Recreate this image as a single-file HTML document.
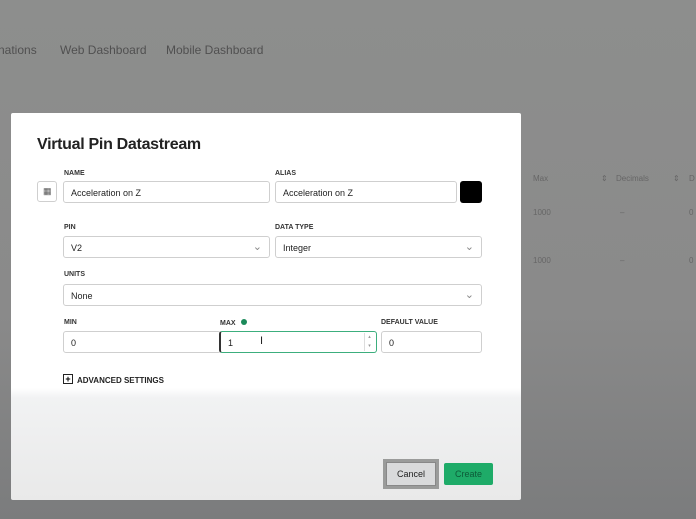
<!DOCTYPE html>
<html><head><style>
*{box-sizing:border-box;margin:0;padding:0}
body{width:696px;height:519px;overflow:hidden;background:linear-gradient(#8d8e8d,#8a8a8a 60%,#7b7c7d);font-family:"Liberation Sans",sans-serif;position:relative}
.nav{position:absolute;top:43px;font-size:12px;color:#505050}
.modal{position:absolute;left:11px;top:113px;width:510px;height:387px;background:linear-gradient(#fff 0,#fff 275px,#f1f2f3 285px,#e9e9e9 100%);border-radius:2px}
.t{position:absolute;font-size:16px;font-weight:bold;color:#222;left:26px;top:23px;letter-spacing:-0.3px}
.lbl{position:absolute;font-size:7px;font-weight:bold;color:#333}
.in{position:absolute;height:22px;border:1px solid #cfcfcf;border-radius:3px;background:#fff;font-size:9px;color:#222;padding:6px 7px}
.chev{position:absolute;right:7px;top:3px;font-size:11px;color:#888}
.th{position:absolute;font-size:8px;color:#666}
</style></head><body>
<div class="nav" style="left:-2px">nations</div>
<div class="nav" style="left:60px">Web Dashboard</div>
<div class="nav" style="left:166px">Mobile Dashboard</div>
<div class="th" style="left:533px;top:174px">Max</div><div class="th" style="left:601px;top:174px">⇕</div>
<div class="th" style="left:616px;top:174px">Decimals</div><div class="th" style="left:673px;top:174px">⇕</div><div class="th" style="left:689px;top:174px">D</div>
<div class="th" style="left:533px;top:208px">1000</div><div class="th" style="left:620px;top:208px">–</div><div class="th" style="left:689px;top:208px">0</div>
<div class="th" style="left:533px;top:256px">1000</div><div class="th" style="left:620px;top:256px">–</div><div class="th" style="left:689px;top:256px">0</div>
<div class="modal">
<div class="t">Virtual Pin Datastream</div>
<div class="lbl" style="left:53px;top:57px">NAME</div>
<div class="lbl" style="left:264px;top:57px">ALIAS</div>
<div class="in" style="left:26px;top:68px;width:20px;height:21px;padding:4px 5px;font-size:9px;color:#555">▦</div>
<div class="in" style="left:52px;top:68px;width:207px">Acceleration on Z</div>
<div class="in" style="left:264px;top:68px;width:182px">Acceleration on Z</div>
<div style="position:absolute;left:449px;top:68px;width:22px;height:22px;background:#000;border-radius:3px"></div>
<div class="lbl" style="left:53px;top:111px">PIN</div>
<div class="lbl" style="left:264px;top:111px">DATA TYPE</div>
<div class="in" style="left:52px;top:123px;width:207px">V2<span class="chev">⌄</span></div>
<div class="in" style="left:264px;top:123px;width:207px">Integer<span class="chev">⌄</span></div>
<div class="lbl" style="left:53px;top:158px">UNITS</div>
<div class="in" style="left:52px;top:171px;width:419px">None<span class="chev">⌄</span></div>
<div class="lbl" style="left:53px;top:206px">MIN</div>
<div class="lbl" style="left:209px;top:206px">MAX <span style="display:inline-block;width:6px;height:6px;border-radius:50%;background:#1b8a5a;margin-left:3px"></span></div>
<div class="lbl" style="left:370px;top:206px">DEFAULT VALUE</div>
<div class="in" style="left:52px;top:218px;width:158px">0</div>
<div class="in" style="left:208px;top:218px;width:158px;border-color:#3cae7d;border-left:2px solid #333">1<span style="position:absolute;left:39px;top:3px;font-size:11px">I</span><span style="position:absolute;right:2px;top:1px;width:10px;height:18px;border-left:1px solid #ddd;font-size:5px;color:#999;text-align:center;line-height:9px">▴<br>▾</span></div>
<div class="in" style="left:370px;top:218px;width:101px">0</div>
<div style="position:absolute;left:52px;top:261px;width:10px;height:10px;border:1px solid #222;font-size:9px;line-height:8px;text-align:center;font-weight:bold">+</div>
<div class="lbl" style="left:66px;top:263px;font-size:8px;color:#222">ADVANCED SETTINGS</div>
<div style="position:absolute;left:372px;top:346px;width:56px;height:30px;background:#9a9b9a;padding:3px"><div style="background:#d9dadb;height:100%;border:1px solid #888;font-size:9px;text-align:center;line-height:22px;color:#222">Cancel</div></div>
<div style="position:absolute;left:433px;top:350px;width:49px;height:22px;background:#1eab68;border-radius:2px;font-size:9px;text-align:center;line-height:22px;color:#0d5b38">Create</div>
</div>
</body></html>
